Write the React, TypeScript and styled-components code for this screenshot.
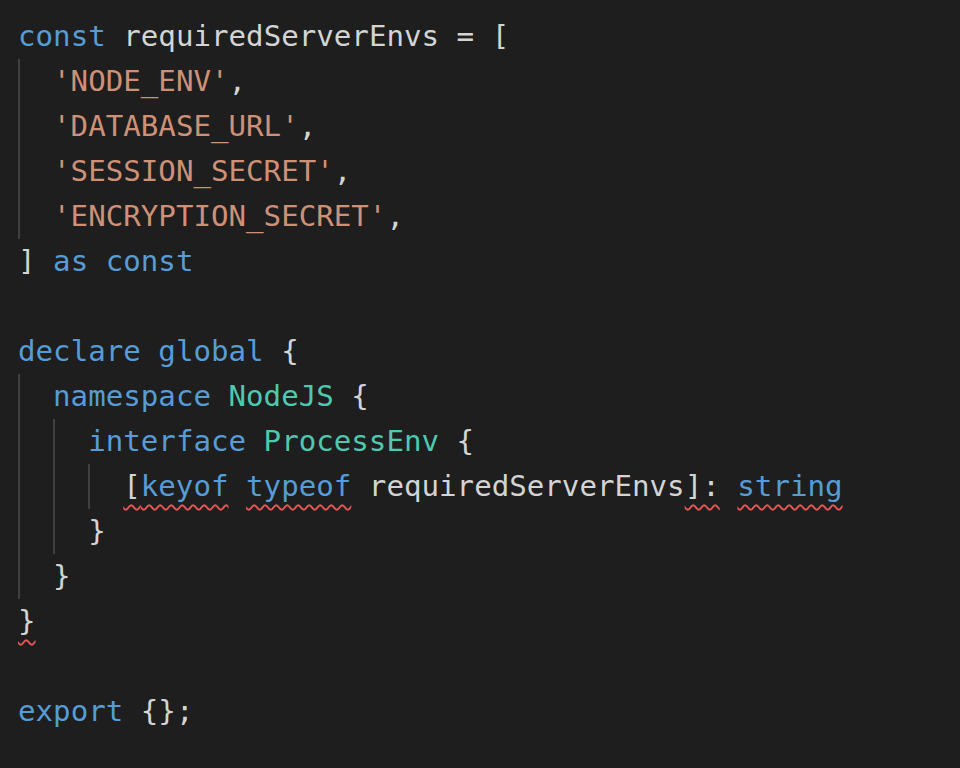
import React from 'react';
import styled, { createGlobalStyle } from 'styled-components';

const Global = createGlobalStyle`
  html, body { margin: 0; padding: 0; background: #1e1e1e; }
  body { width: 960px; height: 768px; overflow: hidden; }
`;

const Editor = styled.div`
  width: 960px;
  height: 768px;
  box-sizing: border-box;
  background: #1e1e1e;
  padding: 14px 0 0 18px;
  font-family: "DejaVu Sans Mono", "Liberation Mono", monospace;
  font-size: 29.15px;
  color: #d4d4d4;
  display: flex;
  flex-direction: column;
`;

const Line = styled.div`
  height: 45px;
  line-height: 45px;
  display: flex;
  align-items: stretch;
  white-space: pre;
`;

const Indent = styled.span`
  width: 2ch;
  box-sizing: border-box;
  border-left: 2px solid #404040;
  flex: none;
`;

type Kind = 'kw' | 'str' | 'type' | 'plain';

const colors: Record<Kind, string> = {
  kw: '#569cd6',
  str: '#ce9178',
  type: '#4ec9b0',
  plain: '#d4d4d4',
};

const Token = styled.span<{ $kind: Kind; $squiggle?: boolean }>`
  color: ${(p) => colors[p.$kind]};
  ${(p) =>
    p.$squiggle
      ? `text-decoration: underline wavy #e85555;
         text-decoration-thickness: 2px;
         text-underline-offset: 8px;
         text-decoration-skip-ink: none;`
      : ''}
`;

type Tok = [string, Kind, boolean?];
type LineData = { indent: number; tokens: Tok[] };

const lines: LineData[] = [
  { indent: 0, tokens: [['const', 'kw'], [' requiredServerEnvs = [', 'plain']] },
  { indent: 1, tokens: [["'NODE_ENV'", 'str'], [',', 'plain']] },
  { indent: 1, tokens: [["'DATABASE_URL'", 'str'], [',', 'plain']] },
  { indent: 1, tokens: [["'SESSION_SECRET'", 'str'], [',', 'plain']] },
  { indent: 1, tokens: [["'ENCRYPTION_SECRET'", 'str'], [',', 'plain']] },
  { indent: 0, tokens: [[']', 'plain'], [' ', 'plain'], ['as', 'kw'], [' ', 'plain'], ['const', 'kw']] },
  { indent: 0, tokens: [] },
  { indent: 0, tokens: [['declare', 'kw'], [' ', 'plain'], ['global', 'kw'], [' {', 'plain']] },
  { indent: 1, tokens: [['namespace', 'kw'], [' ', 'plain'], ['NodeJS', 'type'], [' {', 'plain']] },
  { indent: 2, tokens: [['interface', 'kw'], [' ', 'plain'], ['ProcessEnv', 'type'], [' {', 'plain']] },
  {
    indent: 3,
    tokens: [
      ['[', 'plain', true],
      ['keyof', 'kw', true],
      [' ', 'plain'],
      ['typeof', 'kw', true],
      [' requiredServerEnvs', 'plain'],
      [']:', 'plain', true],
      [' ', 'plain'],
      ['string', 'kw', true],
    ],
  },
  { indent: 2, tokens: [['}', 'plain']] },
  { indent: 1, tokens: [['}', 'plain']] },
  { indent: 0, tokens: [['}', 'plain', true]] },
  { indent: 0, tokens: [] },
  { indent: 0, tokens: [['export', 'kw'], [' {};', 'plain']] },
];

export default function App() {
  return (
    <>
      <Global />
      <Editor>
        {lines.map((l, i) => (
          <Line key={i}>
            {Array.from({ length: l.indent }).map((_, j) => (
              <Indent key={j} />
            ))}
            {l.tokens.map(([t, k, s], j) => (
              <Token key={j} $kind={k} $squiggle={s}>
                {t}
              </Token>
            ))}
            {l.tokens.length === 0 ? ' ' : null}
          </Line>
        ))}
      </Editor>
    </>
  );
}
